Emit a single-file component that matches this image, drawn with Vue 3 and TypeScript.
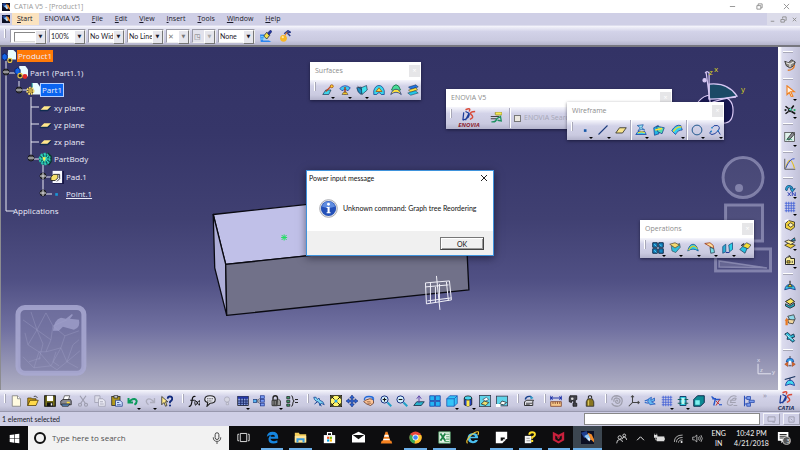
<script setup lang="ts">
import { h } from 'vue'

interface Tool { icon: string; label: string; more?: boolean }

const K = '#10203a'
const icons: Record<string, string> = {
  app: `<rect width="16" height="16" fill="#0b0f24"/><path d="M0 2L7 0L9 7L4 9Z" fill="#1d3f8f"/><path d="M4 6L10 3L13 8L9 12Z" fill="#8fc8f5"/><path d="M8 2L13 4L16 10V14L12 10Z" fill="#f08a2a"/><path d="M8 8L12 10L10 13Z" fill="#fff"/>`,
  brush: `<path d="M0 6H6L4 14H12L15 16H1Z" fill="#2a86f0"/><path d="M1 9H7M1 12H9" stroke="#7fe0ff" stroke-width="1.5"/><path d="M5 8L9 3L13 7L9 12Z" fill="#f4e04a" stroke="${K}"/><path d="M10 4L14 0L16 2L12 7Z" fill="#2233a8" stroke="${K}" stroke-width=".6"/>`,
  wizard: `<circle cx="6" cy="11" r="4.5" fill="#f7b526"/><circle cx="5" cy="9.500" r="1.500" fill="#ffe89a"/><path d="M7 5L12 1L15 3L11 4L15 8" stroke="#2b3c8c" stroke-width="2" fill="none"/><path d="M8 7L11 3" stroke="#e07820" stroke-width="1.500"/>`,
  newdoc: `<path d="M3 1H10L14 5V15H3Z" fill="#fffbe0" stroke="#777"/><path d="M10 1V5H14" fill="#fff" stroke="#777"/>`,
  open: `<path d="M1 14V4H6L7 5H12V8H5Z" fill="#c79a18" stroke="#4d3a00"/><path d="M1 14L4 7H15L12 14Z" fill="#ffd94a" stroke="#4d3a00"/><path d="M9 2Q12 0 14 4" stroke="#222" fill="none"/>`,
  save: `<path d="M1 1H15V15H1Z" fill="#77701a" stroke="#111" stroke-width="1.500"/><rect x="4" y="1" width="8" height="7" fill="#fff"/><rect x="4" y="10" width="8" height="5" fill="#111"/><rect x="9" y="11" width="2" height="3" fill="#eee"/>`,
  print: `<path d="M4 7L6 1H13L11 7Z" fill="#fff" stroke="#444"/><path d="M1 8L4 6H14L15 8V13H1Z" fill="#8b8b92" stroke="#222"/><path d="M2 12H13L11 15H3Z" fill="#5a8bc0" stroke="#222"/><rect x="9" y="9" width="4" height="2" fill="#ffe13a"/>`,
  cut: `<path d="M4 1L11 11M12 1L5 11" stroke="#9c9cad" stroke-width="1.500"/><circle cx="4" cy="13" r="2" fill="none" stroke="#9c9cad" stroke-width="1.500"/><circle cx="12" cy="13" r="2" fill="none" stroke="#9c9cad" stroke-width="1.500"/>`,
  copy: `<path d="M1 1H8V10H1Z" fill="#dcdce8" stroke="#9c9cad"/><path d="M6 5H12L15 8V15H6Z" fill="#e8e8f2" stroke="#9c9cad"/><path d="M8 9H12M8 12H13" stroke="#9c9cad"/>`,
  paste: `<rect x="1" y="2" width="11" height="12" fill="#b49a1c" stroke="#222"/><rect x="4" y="1" width="5" height="3" fill="#ddd" stroke="#222"/><path d="M6 7H12L15 10V15H6Z" fill="#cfe2ff" stroke="#223a88"/><path d="M8 10H11M8 13H13" stroke="#223a88"/>`,
  undo: `<path d="M2 4V10H8M2 10L5 7Q11 3 13 8Q13 11 10 13" fill="none" stroke="#0b9a5c" stroke-width="2.600"/>`,
  redo: `<path d="M14 4V10H8M14 10L11 7Q5 3 3 8Q3 11 6 13" fill="none" stroke="#adadbc" stroke-width="1.800"/>`,
  help: `<path d="M1 2V13L4 10L6 15L8 14L6 9H9Z" fill="#ffe98a" stroke="#222"/><path d="M9 5Q9 2 12 2Q15 2 15 5Q15 7 12 9V11" fill="none" stroke="#102a7c" stroke-width="2.400"/><circle cx="12" cy="14" r="1.400" fill="#102a7c"/>`,
  formula: `<path d="M1 15Q4 16 5 10L6 4Q7 1 10 2M3 7H9" fill="none" stroke="#111" stroke-width="1.600"/><path d="M10 7Q8 10 10 14M15 7Q17 10 15 14M11 8L14 13M14 8L11 13" fill="none" stroke="#111" stroke-width="1.300"/>`,
  bubble: `<path d="M8 1Q15 1 15 6Q15 11 8 11L4 15L5 10Q1 9 1 6Q1 1 8 1Z" fill="#e8e8f2" stroke="#222" stroke-width="1.500"/><path d="M4 5H12M4 8H11" stroke="#555" stroke-width="1.500" stroke-dasharray="2 1"/>`,
  bulb: `<circle cx="8" cy="6" r="3.500" fill="#d6d6e2" stroke="#a8a8b8"/><path d="M7 10H10V13H7Z" fill="#d6d6e2" stroke="#a8a8b8"/>`,
  table: `<rect x="1" y="2" width="14" height="12" fill="#8ca4e8" stroke="#111"/><rect x="1" y="2" width="14" height="3" fill="#2336a8"/><path d="M1 8H15M1 11H15M5 4V14M8.500 4V14M12 4V14" stroke="#1c2a68" stroke-width="1.300"/>`,
  tree: `<path d="M4 8L12 3M4 8H12M4 8L12 13" stroke="#555" fill="none"/><rect x="0" y="6" width="5" height="4" fill="#5bb4f0" stroke="#204080"/><rect x="10" y="1" width="5" height="3.500" fill="#7a9cf5" stroke="#203890"/><rect x="10" y="6" width="5" height="3.500" fill="#7a9cf5" stroke="#203890"/><rect x="10" y="11" width="5" height="3.500" fill="#7a9cf5" stroke="#203890"/>`,
  lock: `<path d="M4 7V4Q4 1 7 1Q10 1 10 4V7" fill="none" stroke="#222" stroke-width="1.800"/><rect x="2" y="6" width="9" height="9" rx="2" fill="#444"/><path d="M4 8V13M7 8V13" stroke="#aaa"/><path d="M11 5L14 8V14H10" fill="#999" stroke="#222"/>`,
  rules: `<path d="M1 2H5V5H1ZM1 7H5V10H1ZM1 12H5V15H1Z" fill="#3aa06a" stroke="#222"/><path d="M7 1Q9 1 9 4Q9 8 11 8Q9 8 9 12Q9 15 7 15" stroke="#222" fill="none" stroke-width="1.300"/><path d="M12 6H16M12 10H16" stroke="#222" stroke-width="1.300"/>`,
  fly: `<path d="M1 3L4 3L6 6L8 4L9 7L13 9L15 13L11 11L9 14L8 10L4 8L2 6Z" fill="#7fd8f5" stroke="#123f90"/><path d="M2 12L6 9M11 15L9 11" stroke="#123f90" stroke-width="1.300"/>`,
  fit: `<rect x=".500" y=".500" width="15" height="15" fill="#fff56a" stroke="#111"/><path d="M2 2L6 6M14 2L10 6M2 14L6 10M14 14L10 10" stroke="#111" stroke-width="1.300"/><path d="M2 5V2H5M11 2H14V5M2 11V14H5M11 14H14V11" fill="none" stroke="#111"/><path d="M8 5.500L10.500 8L8 10.500L5.500 8Z" fill="#26a4e8"/>`,
  pan: `<path d="M8 0L11 4H9V7H12V5L16 8L12 11V9H9V12H11L8 16L5 12H7V9H4V11L0 8L4 5V7H7V4H5Z" fill="#2b62d8" stroke="#0d2466" stroke-width=".700"/>`,
  rotate: `<path d="M2 7Q1 2 8 2Q14 2 14 5" fill="none" stroke="#2068d8" stroke-width="1.800"/><path d="M3 7L9 5L14 6L14 11L10 14L5 12L1 9Z" fill="#ffc79a" stroke="#5a2a18"/><path d="M5 9H10M6 11H11" stroke="#5a2a18" stroke-width=".700"/><path d="M11 4L15 5L14 8" fill="#2068d8"/>`,
  zoomin: `<circle cx="6" cy="6" r="4.800" fill="#d8f4ff" stroke="#102a7c" stroke-width="1.300"/><path d="M3.500 6H8.500M6 3.500V8.500" stroke="#111" stroke-width="1.500"/><path d="M10 10L15 15" stroke="#1fa0c8" stroke-width="2.600"/>`,
  zoomout: `<circle cx="6" cy="6" r="4.800" fill="#d8f4ff" stroke="#102a7c" stroke-width="1.300"/><path d="M3.500 6H8.500" stroke="#111" stroke-width="1.500"/><path d="M10 10L15 15" stroke="#1fa0c8" stroke-width="2.600"/>`,
  normal: `<path d="M1 14L5 9H15L11 14Z" fill="#28b4cc" stroke="${K}"/><path d="M8 11V2M5 5L8 1L11 5" fill="none" stroke="#5a44a8" stroke-width="1.300"/>`,
  views: `<path d="M1 1H7.500V7.500H1ZM8.500 1H15V7.500H8.500ZM1 8.500H7.500V15H1ZM8.500 8.500H15V15H8.500Z" fill="#25b4f4" stroke="#1238a0"/>`,
  cube: `<path d="M1 5L5 1H15V11L11 15H1Z" fill="#35c4f8" stroke="#1650b0"/><path d="M1 5H11V15M11 5L15 1" fill="none" stroke="#1650b0"/>`,
  cyl: `<path d="M3 4V13Q8 17 13 13V4Z" fill="#2446c8" stroke="#111"/><path d="M6 5V15H10V5Z" fill="#ffe84a"/><ellipse cx="8" cy="4" rx="5" ry="2.800" fill="#48d6f0" stroke="#111"/>`,
  hide: `<rect x=".500" y=".500" width="15" height="15" fill="#5fd4ea" stroke="#334"/><path d="M3 12L7 8L13 10L9 14Z" fill="#ece070" stroke="#222"/><path d="M5 6L10 3L13 6L9 8Z" fill="#fff" stroke="#456"/>`,
  swap: `<rect x=".500" y="1.500" width="15" height="13" fill="#5fd4ea" stroke="#334"/><path d="M5 12L8 8L14 10L10 13Z" fill="#fff" stroke="#222"/><path d="M0 12H6V16H0Z" fill="#fff"/>`,
  batch: `<path d="M3 6Q4 1 10 2L12 4" fill="none" stroke="#16408c" stroke-width="1.800"/><path d="M10 1L14 4L10 6Z" fill="#2c9cc8"/><path d="M2 9L5 7H14L13 9V14H2Z" fill="#dedee4" stroke="#222" stroke-width="1.200"/><path d="M4 11H12M4 13H9" stroke="#222"/>`,
  measure: `<path d="M1 4H15M1 1V7M15 1V7M4 2L1 4L4 6M12 2L15 4L12 6" fill="none" stroke="#2034a8" stroke-width="1.300"/><rect x="1" y="9" width="14" height="6" fill="#f6c88a" stroke="#7a3c20"/><path d="M4 9V12M7 9V12M10 9V12M13 9V12" stroke="#7a3c20"/>`,
  caliper: `<path d="M4 1H13V6L11 7V11H13V15H8V11H9V8H6V10L3 9V4Z" fill="#44444c" stroke="#111"/><circle cx="7" cy="5" r="1.700" fill="#ddd"/>`,
  weight: `<path d="M6 4Q5 1 8 1Q11 1 10 4" fill="none" stroke="#222" stroke-width="1.400"/><path d="M5 5H11L13 9V15H3V9Z" fill="#8a7620" stroke="#222"/><path d="M6 7V14" stroke="#d8c45a" stroke-width="1.600"/>`,
  update: `<path d="M1 7Q1 1 8 1Q15 2 15 8Q14 15 8 15Q3 15 1 11M4 9Q3 4 8 4Q12 5 12 8Q11 12 8 11Q5 10 7 7Q9 6 9 9" fill="none" stroke="#9e9eac" stroke-width="1.700"/>`,
  axis: `<path d="M6 1V10H15M6 10L1 15M4 3L6 1L8 3M13 8L15 10L13 12" fill="none" stroke="#444" stroke-width="1.400"/>`,
  mean: `<path d="M1 8L6 6M1 10L6 11" stroke="#2064c8" stroke-width="1.500"/><path d="M6 5L10 3L9 7L14 4V8L10 9L15 12L8 13L5 9Z" fill="#64b8f0" stroke="#2454b8"/>`,
  grid: `<path d="M1 3H15M1 6.300H15M1 9.700H15M1 13H15M3 1V15M6.300 1V15M9.700 1V15M13 1V15" stroke="#3a5ad4" stroke-width="1"/>`,
  box3: `<path d="M4 2H12V14H4Z" fill="#30d0e0" stroke="#12406c" stroke-width="1.300"/><path d="M1 6H15M1 11H15" stroke="#0c5c58" stroke-width="1.300"/><path d="M6 4H10V12H6Z" fill="#bdf6f2"/>`,
  solid: `<path d="M1 6L6 1H15V10L10 15H1Z" fill="#0c8a94" stroke="#0b2a4c" stroke-width="1.300"/><path d="M3 7H9V13H3Z" fill="#7ff0f0"/>`,
  link: `<path d="M2 2L7 6L5 14M7 6H14M3 5H8" fill="none" stroke="#2454c8" stroke-width="1.800"/><path d="M8 14L13 6M8 8L13 13" stroke="#c03030" stroke-width="1.300"/><path d="M12 13H16" stroke="#2454c8" stroke-width="1.500"/>`,
  clip: `<path d="M14 2Q8 -1 4 5Q0 11 3 13Q7 15 9 12M5 7H12Q15 4 12 4Q7 5 6 10H13M10 14H15" fill="none" stroke="#a2a2b2" stroke-width="1.500"/>`,
  struct: `<path d="M2 1V15M2 4H6M2 12H6" stroke="#2c50b8" stroke-width="1.500"/><path d="M5 2H10V6H5ZM8 7H15V10H8ZM5 11H10V15H5Z" fill="#7a9cf0" stroke="#2446a8"/>`,
  sketchpt: `<path d="M1 14L5 8H12L9 14Z" fill="#3fd2e8" stroke="${K}" stroke-width=".800"/><path d="M5 10L12 3" stroke="#c04418" stroke-width="1.500"/><circle cx="13" cy="3" r="2" fill="#ffd22e" stroke="#a04a10"/>`,
  revolve: `<path d="M1 6Q7 -1 15 5L12 9Q8 5 4 9Z" fill="#3cc8ee" stroke="#2038a8"/><path d="M8 4V14" stroke="#a84418" stroke-width="2"/><path d="M4 14H12L10 11H6Z" fill="#f4c628" stroke="#222" stroke-width=".600"/>`,
  offset: `<path d="M1 5L7 4L9 9L7 14Q2 12 1 5Z" fill="#1f8cc0" stroke="${K}" stroke-width=".800"/><path d="M7 5L14 2L15 8L8 14Z" fill="#42e0ee" stroke="${K}" stroke-width=".800"/><path d="M2 3L8 8" stroke="#334"/>`,
  sweep: `<path d="M1 14V9Q3 2 8 2Q13 2 15 9V14H11Q8 9 5 14Z" fill="#39d6ea" stroke="#123f90"/><path d="M4 10L8 5L12 10Z" fill="#ffe23a" stroke="#a0480c"/>`,
  fill: `<path d="M2 8Q4 1 8 1Q12 1 14 8L10 9H6Z" fill="#49dc98" stroke="#146040"/><path d="M1 14Q3 7 8 7Q13 7 15 14Q8 8 1 14Z" fill="#ffe23a" stroke="#143080"/>`,
  multi: `<path d="M2 4L12 1L15 4L5 7Z" fill="#2074e0" stroke="${K}" stroke-width=".600"/><path d="M2 8L12 5L14 8L5 11Z" fill="#ffe23a" stroke="${K}" stroke-width=".600"/><path d="M1 12L11 9L15 12L5 15Z" fill="#25c8e8" stroke="${K}" stroke-width=".600"/>`,
  point: `<rect x="6.500" y="7" width="3.500" height="3.500" fill="#1658a8"/>`,
  line: `<path d="M2 14L14 2" stroke="#1c3c7c" stroke-width="1.500"/>`,
  plane: `<path d="M1 12L6 5H15L10 12Z" fill="#f8e38c" stroke="#3c3c30" stroke-width="1.200"/>`,
  project: `<path d="M3 2L11 1L9 5L13 8L9 7L4 9L7 5Z" fill="#9be4ee" stroke="#1a58a8"/><path d="M1 14L4 10H13L15 14Z" fill="#35c8ea" stroke="#1a3aa0"/><path d="M4 12Q9 9 13 12" stroke="#f0d830" fill="none" stroke-width="1.500"/>`,
  inter: `<path d="M1 5L7 2L8 13L2 15Z" fill="#24b4e4" stroke="#123f90"/><path d="M5 3L15 5L12 13L6 10Z" fill="#58dcb0" stroke="#123f90"/><path d="M3 8L12 6" stroke="#ffe23a" stroke-width="2"/>`,
  parallel: `<path d="M1 9Q6 0 13 2L15 8Q9 8 6 14Z" fill="#35d0ee" stroke="#1a3aa0"/><path d="M3 10Q8 3 14 4" fill="none" stroke="#f4d82a" stroke-width="1.800"/>`,
  circle: `<circle cx="8" cy="8" r="6.500" fill="none" stroke="#1c548c" stroke-width="1.300"/>`,
  spline: `<path d="M3 9Q-1 13 4 14Q8 14 12 9Q16 4 11 2Q6 1 4 5M12 9L15 14" fill="none" stroke="#1c3c98" stroke-width="1.300"/><path d="M3 4h2v2h-2zM2 9h2v2h-2zM11 8h2v2h-2z" fill="#2a8cd0"/>`,
  join: `<path d="M1 1H7V7H1ZM9 1H15V7H9ZM1 9H7V15H1ZM9 9H15V15H9Z" fill="#1584c4" stroke="#0a2848" stroke-width="1.300"/><path d="M3 3L6 6M10 3L13 6M3 11L6 14" stroke="#6ae6f8"/>`,
  heal: `<path d="M3 6L8 5L14 2L15 7L9 14L4 12Z" fill="#32bcd8" stroke="#27404c" stroke-width=".800"/><path d="M1 3L8 1L14 4L8 8Z" fill="#f3d870" stroke="#5c5030"/>`,
  border: `<path d="M1 12Q3 3 8 3Q13 3 15 12Q8 7 1 12Z" fill="#2fd0ea" stroke="#12508c"/><path d="M2 11Q8 1 14 9" fill="none" stroke="#d8c82a" stroke-width="1.600"/>`,
  extract: `<path d="M1 2L8 1Q14 4 13 9L8 6Z" fill="#ffdf9a" stroke="#983010"/><path d="M8 7L13 9L14 14L9 15Z" fill="#7adce4" stroke="#244050"/>`,
  translate: `<path d="M1 6L5 3V13L1 15Z" fill="#2bb0d8" stroke="#184878"/><path d="M9 4L14 1V10L10 13Z" fill="#2bd0e8" stroke="#184878"/><path d="M5 14H10" stroke="#223a98" stroke-width="1.500"/>`,
  extrap: `<path d="M1 10L6 5L11 8L8 15Z" fill="#28c0e0" stroke="${K}" stroke-width=".800"/><path d="M5 6L10 1L16 4L12 9Z" fill="#f4de38" stroke="${K}" stroke-width=".800"/><path d="M3 5L7 2" stroke="#222" stroke-width="1.500"/>`,
  shape: `<path d="M1 3L6 5L10 1L15 4L13 9L8 12L3 9Z" fill="#8c8880" stroke="#222"/><path d="M3 5L8 7L13 4M8 7V11" stroke="#eee" fill="none" stroke-width="1.400"/><path d="M5 15Q13 15 14 8" stroke="#e07820" stroke-width="1.800" fill="none"/>`,
  select: `<path d="M4 1V13L7 10L10 16L12 15L9 9H14Z" fill="#fff2e0" stroke="#f08020" stroke-width="1.500"/>`,
  gear: `<path d="M2 3L6 6M13 2L10 6M2 13L6 10M15 13L10 10" stroke="#111" stroke-width="2"/><circle cx="8" cy="8" r="3" fill="#282828"/><path d="M6 8L9 5L11 9Z" fill="#60e0c8"/><circle cx="2" cy="8" r="1.500" fill="#222"/><circle cx="14" cy="8" r="1.500" fill="#28b06a"/>`,
  sketch: `<rect x="1" y="2" width="13" height="12" fill="#dff2ec" stroke="#444"/><path d="M4 11L11 2L14 4L7 12Z" fill="#8c8c94" stroke="#222"/><path d="M3 12Q6 8 11 12" stroke="#28a070" fill="none"/>`,
  curve: `<path d="M1 1V15H15" stroke="#333" fill="none"/><path d="M2 14Q8 -8 14 14" stroke="#e0bc20" fill="none" stroke-width="1.400"/><path d="M2 14Q8 0 14 1" stroke="#3850c0" fill="none" stroke-width="1.300"/>`,
  rename: `<path d="M2 8Q2 1 8 2Q12 3 12 7L15 6L11 11L8 6H10Q9 4 7 4Q5 4 4 9Z" fill="#28a8d8" stroke="#144878"/><path d="M5 11L9 16M9 11L5 16M11 16V11L15 16V11" stroke="#2c3cb4" stroke-width="1.200" fill="none"/>`,
  pad: `<path d="M2 6L6 2L14 4V11L9 15L2 12Z" fill="#f2d23c" stroke="#222"/><path d="M5 8L9 5L13 8L9 11Z" fill="#fff3b8" stroke="#222"/><path d="M1 3L6 1" stroke="#fff" stroke-width="2"/>`,
  layers: `<path d="M1 11L6 8L15 11L9 15Z" fill="#f2d23c" stroke="#222"/><path d="M1 6L6 4L14 7L9 10Z" fill="#fff0a0" stroke="#222"/><path d="M9 5L14 1L15 5Z" fill="#25a4d8" stroke="#222"/>`,
  block: `<path d="M2 6L5 4H7V2L9 4V6H14V14H2Z" fill="#f8ee9c" stroke="#222" stroke-width="1.300"/><path d="M4 9H8V12H4ZM11 9V12" fill="#d8b830" stroke="#222"/>`,
  dome: `<path d="M1 13Q2 6 8 6Q14 6 15 13Q8 9 1 13Z" fill="#35c8e8" stroke="#17408c" stroke-width="1.200"/><path d="M5 9L8 5L11 9Z" fill="#ffe23a" stroke="#222"/><path d="M8 5V1" stroke="#222" stroke-width="1.500"/>`,
  split: `<path d="M2 6L9 2L14 6L8 10Z" fill="#f4e35a" stroke="#222" stroke-width="1.300"/><path d="M2 9L8 12L14 8L14 12L8 15L2 12Z" fill="#25a4bc" stroke="#222"/>`,
  thick: `<path d="M5 3L13 1L15 7L9 10Z" fill="#8fd8e8" stroke="#333"/><path d="M5 7L14 8L12 13L6 12Z" fill="#f2d7a0" stroke="#333"/><path d="M2 15V9L1 9L3.500 5L6 9H5V15Z" fill="#e87820"/>`,
  morph: `<path d="M1 4L5 2L9 6L13 4L14 8L10 9L14 13L12 15L7 11L4 11L5 8Z" fill="#2fbcd8" stroke="#12304c" stroke-width="1.200"/><path d="M3 5L12 12" stroke="#e8ffff"/>`,
  analysis: `<path d="M3 8Q3 3 8 3Q13 3 13 8Z" fill="#30a4e8" stroke="#173c90"/><circle cx="8" cy="8" r="2" fill="#fff"/><path d="M1 11L5 8V14ZM15 11L11 8V14Z" fill="#e06820" stroke="#8a3010" stroke-width=".600"/><path d="M8 0V3M6 13H10" stroke="#222"/>`,
  drape: `<path d="M2 14Q3 7 8 7Q13 7 14 14Q8 10 2 14Z" fill="#42d8ee" stroke="#1a3aa0" stroke-width="1.200"/><path d="M1 6L15 2M8 4V7" stroke="#14305c" stroke-width="1.400"/>`,
  enovia: `<path d="M4 4L8 6L4 14M2 5L1 14M8 6Q10 11 1 14" fill="none" stroke="#1c3c98" stroke-width="1.400"/><path d="M4 2Q11 -1 8 4M15 4Q9 4 10 7Q15 11 9 13" fill="none" stroke="#d84a38" stroke-width="1.600"/>`,
  transfer: `<rect x="7" y="0" width="9" height="4" rx="1" fill="#f6ea58" stroke="#8c8428"/><path d="M1 6H12M1 9H8" stroke="#444" stroke-width="1.500"/><path d="M2 13Q8 14 9 9L14 6L15 12L10 11" fill="none" stroke="#1e9060" stroke-width="1.800"/>`,
  taskview: `<path d="M4 3H12V13H4ZM1 4V12M1 4H2.500M1 12H2.500M15 4V12M15 4H13.500M15 12H13.500" fill="none" stroke="#ddd" stroke-width="1.200"/>`,
  edge: `<path d="M1 7Q2 1 8 1Q15 1 15 8V9.500H5.500Q6 12.500 10 12.500Q12.500 12.500 14 11.500V14.500Q12 15.500 9 15.500Q3 15.500 3 9.500Q3.500 6 7 5Q3 5 1 7ZM5.600 7H11Q11 4.500 8.500 4.500Q6 4.500 5.600 7Z" fill="#1686e0" fill-rule="evenodd"/>`,
  explorer: `<path d="M1 2H6L7 4H15V14H1Z" fill="#f5cf5a"/><path d="M1 6H15V14H1Z" fill="#ffe69a"/><path d="M3 14V9H13V14H10.500V11.500H5.500V14Z" fill="#3a9ce0"/>`,
  store: `<path d="M1 5H15V15H1Z" fill="#fff"/><path d="M5.500 5V2H10.500V5" fill="none" stroke="#fff" stroke-width="1.300"/><rect x="5" y="7" width="2.700" height="2.700" fill="#f25022"/><rect x="8.300" y="7" width="2.700" height="2.700" fill="#7fba00"/><rect x="5" y="10.300" width="2.700" height="2.700" fill="#00a4ef"/><rect x="8.300" y="10.300" width="2.700" height="2.700" fill="#ffb900"/>`,
  mail: `<path d="M0 5L8 1L16 5V14H0Z" fill="#fff"/><path d="M1 5H15L8 10Z" fill="#111"/>`,
  vlc: `<path d="M6.800 1H9.200L13 13H3Z" fill="#f58220"/><path d="M5.800 4.500H10.200L11 7H5ZM4.300 9.500H11.700L12.200 11.500H3.800Z" fill="#fff"/><path d="M2 12H14L15 15.500H1Z" fill="#f58220"/>`,
  chrome: `<circle cx="8" cy="8" r="7.500" fill="#e8473a"/><path d="M8 8L1.500 4.200A7.500 7.500 0 0 0 7 15.400Z" fill="#34a853"/><path d="M8 8L7 15.400A7.500 7.500 0 0 0 15 5H8Z" fill="#fbc52c"/><circle cx="8" cy="8" r="3.700" fill="#fff"/><circle cx="8" cy="8" r="2.800" fill="#4285f4"/>`,
  excel: `<path d="M1 1H15V15H1Z" fill="#e8f4ea" stroke="#5aa870"/><path d="M3 3L9 12M9 3L3 12" stroke="#1f8446" stroke-width="2.300"/><path d="M10 4H14M10 7H14M10 10H14M8 13H14" stroke="#5aa870" stroke-width="1.300"/>`,
  ie: `<path d="M5.500 9H15Q15 2.500 8.500 2.500Q2 3 2 9Q2.500 15 8.500 15Q13 15 14.700 11H11Q10 12.500 8.500 12.500Q5.700 12.300 5.500 9ZM5.600 7Q6 5 8.500 5Q11 5 11.300 7Z" fill="#4cc0f0" fill-rule="evenodd"/><path d="M2 15Q-1 13 5 6Q12 0 15 1Q16 2 14.500 5" fill="none" stroke="#f2c430" stroke-width="1.400"/>`,
  note: `<path d="M1 1H15V9L9 15H1Z" fill="#fff"/><path d="M7 8H12L12 9L9 12H7Z" fill="#111"/><path d="M10 10H15V15H10Z" fill="#0d0d0f"/><path d="M10 10H14L10 14Z" fill="#fff"/>`,
  chm: `<path d="M1 6H9V15H1Z" fill="#f4f4f4"/><path d="M3 9H7M3 12H8" stroke="#888"/><path d="M6.500 4.500Q6.500 1.500 10 1.500Q13.500 1.500 13.500 4Q13.500 6.500 10 7.500V9.500" fill="none" stroke="#ffe02a" stroke-width="2.300"/><rect x="8.800" y="11" width="2.500" height="2.500" fill="#ffe02a"/>`,
  shield: `<path d="M1 1L8 4.500L15 1V11.500L8 15.500L1 11.500Z" fill="#c8203c"/><path d="M4 5.500L8 8L12 5.500V10L8 12.500L4 10Z" fill="#111"/><path d="M6.500 7L8 8L9.500 7V8.500L8 10L6.500 8.500Z" fill="#c8203c"/>`,
  people: `<circle cx="5.500" cy="6.500" r="2.500" fill="none" stroke="#ddd" stroke-width="1.300"/><path d="M1 15Q1 9.500 5.500 9.500Q9 9.500 9.500 13" fill="none" stroke="#ddd" stroke-width="1.300"/><circle cx="12" cy="3.500" r="2" fill="none" stroke="#ddd" stroke-width="1.300"/><path d="M9 9Q9 6 12 6Q15 6 15.500 10" fill="none" stroke="#ddd" stroke-width="1.300"/>`,
  chevron: `<path d="M3 10.500L8 5.500L13 10.500" fill="none" stroke="#eee" stroke-width="1.400"/>`,
  battery: `<rect x="4" y="5" width="11" height="7" fill="#ddd"/><path d="M15 7H16V10H15ZM0 3H5V7H0Z" fill="#ddd"/><path d="M1 1V3M4 1V3M2.500 7V10H6" stroke="#ddd" fill="none"/>`,
  wifi: `<path d="M2 13Q2 3 14 3M5 13.500Q5 6.500 14 6.500M8 14Q8 10 14 10" fill="none" stroke="#bbb" stroke-width="1.300"/><circle cx="12.500" cy="13" r="1.500" fill="#eee"/>`,
  sound: `<path d="M1 6H3.500L7 3V13L3.500 10H1Z" fill="none" stroke="#ddd"/><path d="M9 6Q10.500 8 9 10M11 4.500Q13.500 8 11 11.500M13 3Q17 8 13 13" fill="none" stroke="#ddd"/>`,
  mic: `<rect x="5.500" y="1" width="5" height="9" rx="2.500" fill="none" stroke="#444" stroke-width="1.300"/><path d="M3 7Q3 12.500 8 12.500Q13 12.500 13 7M8 12.500V16" fill="none" stroke="#444" stroke-width="1.200"/>`,
  windows: `<path d="M1 3L7.300 2V7.600H1ZM8.200 1.900L15 1V7.600H8.200ZM1 8.500H7.300V14L1 13.100ZM8.200 8.500H15V15L8.200 14.100Z" fill="#fff"/>`,
  treeroot: `<path d="M7 1H13L16 4V12H6Z" fill="#eafcff"/><path d="M0 7L3 5L6 7V11L3 13L0 11Z" fill="#1464e8" stroke="#08206c"/><circle cx="9" cy="13" r="2.300" fill="#222" stroke="#e8c84a" stroke-width="1.200"/>`,
  treepart: `<path d="M6 0H13L16 4V12H6Z" fill="#eafcff"/><path d="M1 4L4 2L7 4V8L4 10L1 8Z" fill="#1464e8" stroke="#08206c"/><circle cx="7" cy="11" r="2.500" fill="#222" stroke="#e8c84a" stroke-width="1.300"/><circle cx="12.500" cy="12" r="2.800" fill="#e02828"/>`,
  treegear: `<path d="M7 0H13L16 4V13H8Z" fill="#eafcff"/><path d="M7 0V6" stroke="#18b0a0"/><circle cx="5" cy="9" r="3.600" fill="#3c3010" stroke="#f0d870" stroke-width="2.200" stroke-dasharray="2 1"/><circle cx="5" cy="9" r="2.500" fill="#c8a848"/>`,
  treeplane: `<path d="M3 10L7 6H15L11 10Z" fill="#ffe88a"/><path d="M2 11H11L15 7" stroke="#102c50" stroke-width="1.600" fill="none"/>`,
  treebody: `<circle cx="8" cy="8" r="6" fill="#0c5a60" stroke="#28c0a8" stroke-width="2.500" stroke-dasharray="2.500 1.200"/><path d="M8 2V14M2 8H14M4 4L12 12M12 4L4 12" stroke="#3cf0d0" stroke-width="1.200"/><path d="M5 6L9 6L7 11Z" fill="#fff04a"/><path d="M11 1L15 5V11L12 15" stroke="#08382c" stroke-width="1.500" fill="none"/>`,
  treepad: `<path d="M3 1H14V15H3Z" fill="#f8f8ff"/><path d="M14 1H16V16H3V15H14Z" fill="#151545"/><path d="M1 8L4 5H9V9L6 12H1Z" fill="#f6e06a" stroke="#222"/><path d="M9 5H11V10L8 13" fill="none" stroke="#222"/>`,
  treepoint: `<rect x="6" y="7" width="3" height="3" fill="#1898d8"/>`
}

function Icon(props: { name: string }) {
  return h('svg', { class: 'icon', viewBox: '0 0 16 16', 'aria-hidden': 'true', innerHTML: icons[props.name] })
}
Icon.props = ['name']

// "name:Label" entries; a trailing "+" marks a button with a drop-down arrow
const tools = (list: string): Tool[] =>
  list.split(',').map((entry) => {
    const [icon, label] = entry.replace('+', '').split(':')
    return { icon, label, more: entry.endsWith('+') }
  })

const menus = ['ENOVIA V5', 'File', 'Edit', 'View', 'Insert', 'Tools', 'Window', 'Help']

const combos = [
  { label: 'Colour', value: '', kind: 'swatch' },
  { label: 'Opacity', value: '100%', kind: 'wide' },
  { label: 'Thickness', value: 'No Wid', kind: 'wide' },
  { label: 'Line type', value: 'No Line', kind: 'wide' },
  { label: 'Point symbol', value: '✕', kind: 'small' },
  { label: 'Rendering', value: '◳', kind: 'small off' },
  { label: 'Layer', value: 'None', kind: 'wide' }
]

const bottomGroups: Tool[][] = [
  tools('newdoc:New,open:Open,save:Save,print:Print,cut:Cut,copy:Copy,paste:Paste,undo:Undo+,redo:Redo+,help:Help'),
  tools('formula:Formula,bubble:Comment,bulb:Advisor,table:Design table+,tree:Relations,lock:Lock+,rules:Rules'),
  tools('fly:Fly,fit:Fit all,pan:Pan,rotate:Rotate,zoomin:Zoom in,zoomout:Zoom out,normal:Normal view,views:Multi view,cube:Iso view+,cyl:Shading+,hide:Hide,swap:Swap space'),
  tools('batch:Batch'),
  tools('measure:Measure,caliper:Measure item,weight:Inertia'),
  tools('update:Update,axis:Axis system,mean:Mean,grid:Grid+,box3:Work on support+,solid:Solid,link:Links,clip:Clip,struct:Structure')
]

const sideGroups: Tool[][] = [
  tools('shape:Workbench'),
  tools('select:Select+,gear:Selection filter+'),
  tools('sketch:Sketch+'),
  tools('curve:Law'),
  tools('rename:Repeat+,grid:Grid+,pad:Pad,layers:Layers+,block:Block+'),
  tools('dome:Dome,split:Split,thick:Thicken,morph:Morph'),
  tools('analysis:Analysis,drape:Drape')
]

const palettes = [
  { id: 'surfaces', title: 'Surfaces', tools: tools('sketchpt:Extrude+,revolve:Revolve+,offset:Offset+,sweep:Sweep,fill:Fill,multi:Multi-section') },
  { id: 'wireframe', title: 'Wireframe', tools: tools('point:Point+,line:Line+,plane:Plane,sep:,project:Projection+,inter:Intersection,parallel:Parallel curve+,sep:,circle:Circle+,spline:Spline+') },
  { id: 'operations', title: 'Operations', tools: tools('join:Join+,heal:Split+,border:Boundary+,extract:Fillet+,translate:Translate+,extrap:Extrapolate') }
]

const nodes = [
  { text: 'Product1', icon: 'treeroot', depth: 0, look: 'orange' },
  { text: 'Part1 (Part1.1)', icon: 'treepart', depth: 1, look: '' },
  { text: 'Part1', icon: 'treegear', depth: 2, look: 'blue' },
  { text: 'xy plane', icon: 'treeplane', depth: 3, look: '' },
  { text: 'yz plane', icon: 'treeplane', depth: 3, look: '' },
  { text: 'zx plane', icon: 'treeplane', depth: 3, look: '' },
  { text: 'PartBody', icon: 'treebody', depth: 3, look: '' },
  { text: 'Pad.1', icon: 'treepad', depth: 4, look: '' },
  { text: 'Point.1', icon: 'treepoint', depth: 4, look: 'under' },
  { text: 'Applications', icon: '', depth: 5, look: '' }
]

const apps = [
  { icon: 'taskview', label: 'Task view', state: '' },
  { icon: 'edge', label: 'Edge', state: 'open' },
  { icon: 'explorer', label: 'File Explorer', state: 'open' },
  { icon: 'store', label: 'Store', state: '' },
  { icon: 'mail', label: 'Mail', state: '' },
  { icon: 'vlc', label: 'VLC', state: '' },
  { icon: 'chrome', label: 'Chrome', state: 'open' },
  { icon: 'excel', label: 'Excel', state: 'open' },
  { icon: 'ie', label: 'Internet Explorer', state: '' },
  { icon: 'note', label: 'Notes', state: 'open' },
  { icon: 'chm', label: 'Help viewer', state: 'open' },
  { icon: 'shield', label: 'Security', state: 'open' },
  { icon: 'app', label: 'CATIA', state: 'open active' }
]
</script>

<template>
  <div class="desktop">
    <header class="titlebar">
      <Icon name="app" class="logo" />
      <h1>CATIA V5 - [Product1]</h1>
      <div class="caption">
        <button aria-label="Minimize"><svg viewBox="0 0 8 8"><path d="M1 4H7" /></svg></button>
        <button aria-label="Restore"><svg viewBox="0 0 8 8"><path d="M1 3H5.500V7H1ZM2.500 3V1H7V5.500H5.500" /></svg></button>
        <button aria-label="Close"><svg viewBox="0 0 8 8"><path d="M1 1L7 7M7 1L1 7" /></svg></button>
      </div>
    </header>

    <nav class="menubar">
      <Icon name="app" class="logo" />
      <button class="menu start"><u>S</u>tart</button>
      <button v-for="m in menus" :key="m" class="menu">
        <template v-if="m === 'ENOVIA V5'">{{ m }}</template>
        <template v-else><u>{{ m[0] }}</u>{{ m.slice(1) }}</template>
      </button>
      <div class="mdi">
        <button aria-label="Minimize document"><svg viewBox="0 0 8 8"><path d="M2 6H6" /></svg></button>
        <button aria-label="Restore document"><svg viewBox="0 0 8 8"><path d="M1 4H5V7H1ZM3 3V1H7V5H6" /></svg></button>
        <button aria-label="Close document"><svg viewBox="0 0 8 8"><path d="M2 2L6 6M6 2L2 6" /></svg></button>
      </div>
    </nav>

    <div class="bar format">
      <i class="grip"></i>
      <label v-for="c in combos" :key="c.label" class="combo" :class="c.kind">
        <select :aria-label="c.label"><option>{{ c.value }}</option></select>
      </label>
      <button class="tool" aria-label="Paint"><Icon name="brush" /></button>
      <button class="tool" aria-label="Wizard"><Icon name="wizard" /></button>
    </div>

    <div class="middle">
      <main class="viewport">
        <svg class="scene" viewBox="0 47 778 343" aria-hidden="true">
          <g class="mark">
            <circle cx="743" cy="177.500" r="20" fill="#fff" fill-opacity=".08" stroke-width="3" />
            <circle cx="739" cy="188" r="4" stroke="none" class="solid" />
            <rect x="725.500" y="205" width="37" height="36" fill="#fff" fill-opacity=".08" stroke-width="3" />
            <rect x="715.500" y="249" width="55" height="22" fill="none" stroke-width="3" />
            <path d="M719 267V261L767 268Z" fill="#fff" fill-opacity=".15" stroke-width="1.500" />
          </g>
          <g>
            <rect x="17" y="307.500" width="66" height="66" rx="7" fill="#7474a2" fill-opacity=".6" stroke="#a9a9d2" stroke-width="5" stroke-opacity=".85" />
            <path class="veins" d="M22 320L36 330L45 313L52 326L66 320M30 312L36 330L27 345L38 352L33 368M36 330L50 340L45 352L60 348L66 362L79 351M50 340L52 326L64 336L78 331M38 352L50 366L60 348L64 336M22 357L33 368L50 366L56 370L66 362L77 368M24 333L27 345M45 352L38 352M66 362L72 345L78 340M36 330L42 344L38 360M55 352L52 362L58 366M28 362L40 358" />
            <path d="M52 331Q53 320 60 318L65 319L71 314L72 315L69 319L78 320Q80 328 73 330L62 327L58 331Z" fill="#a3a3ce" fill-opacity=".75" />
          </g>
          <g stroke="#0a0a12" stroke-width="1.300" stroke-linejoin="round">
            <path d="M212.500 214.500L225 264.500L466 239L440 190Z" fill="#c0c0e8" />
            <path d="M212.500 214.500L225 264.500L226 315.500L214 268Z" fill="#aeaed8" />
            <path d="M225 264.500L466 239L468.500 290L226 315.500Z" fill="#717189" />
          </g>
          <path d="M281 235L286 240M286 235L281 240M280.500 237.500H286.500M283.500 234.500V240.500" stroke="#20e060" stroke-width="1" />
          <path class="triad" d="M425 283L449 281L451 300L426 304ZM425 287L448 285M427 301L451 298M430 283V303M446 282L448 301M436 276L439.500 310M435 287V303M439 284V301" />
          <g stroke="#d8c8f4" fill="none" stroke-width="1.200">
            <path d="M694 110Q700 92 718 95Q733 97 733 110Q733 123 723 123H700Z" fill="#181850" />
            <path d="M709 84Q728 82 737 96Q724 99 709 99Z" fill="#1b4a66" />
            <path d="M706 72L710 102M709 72V99M705 73Q707 70 709 73M708 104Q721 98 736 97" />
            <circle cx="704.500" cy="80" r="1.600" fill="#d8c8f4" />
          </g>
          <g class="axes"><text x="714" y="72">x</text><text x="709" y="75">z</text><text x="741" y="92">y</text></g>
          <path d="M758 364V374H771" stroke="#e4e4f0" fill="none" />
          <g class="mini"><text x="757" y="362">x</text><text x="760" y="372">z</text><text x="772" y="374">y</text></g>
        </svg>

        <section class="tree" aria-label="Specification tree">
          <svg class="branches" viewBox="0 0 90 173" aria-hidden="true">
            <path d="M5 14V164H13M5 26H15M18 34V43H28M30 50V112H38M30 60H38M30 77H38M30 95H38M42 118V147H51M42 130H51" />
            <g>
              <circle cx="5" cy="25" r="3" /><circle cx="18" cy="43" r="3" /><circle cx="30" cy="111" r="3" />
              <circle cx="42" cy="129" r="3" /><circle cx="42" cy="146" r="3" />
            </g>
            <path class="signs" d="M2 25H8M15 43H21M27 111H33M39 129H45M42 126V132M39 146H45M42 143V149" />
          </svg>
          <div v-for="n in nodes" :key="n.text" class="node" :class="'d' + n.depth">
            <Icon v-if="n.icon" :name="n.icon" />
            <span :class="n.look">{{ n.text }}</span>
          </div>
        </section>

        <section class="palette enovia">
          <header><h2>ENOVIA V5</h2><button class="x" aria-label="Close ENOVIA V5">×</button></header>
          <div class="bar">
            <i class="grip"></i>
            <span class="brand"><Icon name="enovia" /><b>ENOVIA</b></span>
            <button class="tool" aria-label="Transfer"><Icon name="transfer" /></button>
            <i class="sep"></i>
            <label class="search-box"><input type="checkbox" disabled />ENOVIA Search</label>
          </div>
        </section>

        <section v-for="p in palettes" :key="p.id" class="palette" :class="p.id">
          <header><h2>{{ p.title }}</h2><button class="x" :aria-label="'Close ' + p.title">×</button></header>
          <div class="bar">
            <i class="grip"></i>
            <template v-for="(t, i) in p.tools" :key="i">
              <i v-if="t.icon === 'sep'" class="sep"></i>
              <button v-else class="tool" :class="{ more: t.more }" :aria-label="t.label"><Icon :name="t.icon" /></button>
            </template>
          </div>
        </section>

        <section class="dialog" role="dialog" aria-labelledby="dialog-title">
          <header>
            <h2 id="dialog-title">Power input message</h2>
            <button aria-label="Close"><svg viewBox="0 0 8 8"><path d="M1 1L7 7M7 1L1 7" /></svg></button>
          </header>
          <div class="message">
            <svg viewBox="0 0 20 20" aria-hidden="true">
              <circle cx="10" cy="10" r="9.300" fill="#e4e6ea" stroke="#a6a8ae" />
              <circle cx="10" cy="10" r="8" fill="#2350b8" />
              <path d="M3 8Q5 2.500 10 2.500Q15 2.500 17 8Q10 11 3 8Z" fill="#5f8ce0" />
              <circle cx="10" cy="5.500" r="1.500" fill="#fff" />
              <path d="M8 8.500H11.200V14H12.200V15H8V14H9V9.500H8Z" fill="#fff" />
            </svg>
            <p>Unknown command: Graph tree Reordering</p>
          </div>
          <footer><button>OK</button></footer>
        </section>
      </main>

      <aside class="side">
        <div v-for="(g, i) in sideGroups" :key="i" class="group">
          <i class="grip"></i>
          <button v-for="t in g" :key="t.label" class="tool" :class="{ more: t.more }" :aria-label="t.label"><Icon :name="t.icon" /></button>
        </div>
      </aside>
    </div>

    <div class="bar bottom">
      <div v-for="(g, i) in bottomGroups" :key="i" class="group">
        <i class="grip"></i>
        <button v-for="t in g" :key="t.label" class="tool" :class="{ more: t.more }" :aria-label="t.label"><Icon :name="t.icon" /></button>
      </div>
      <span class="overflow">»</span>
      <span class="brand catia"><Icon name="enovia" /><b>CATIA</b></span>
    </div>

    <div class="status">
      <span>1 element selected</span>
      <input type="text" aria-label="Power input" />
      <button aria-label="Dialog"><svg viewBox="0 0 10 8"><path d="M1 1H9V6H1ZM6 7H9" /></svg></button>
      <button aria-label="Options"><svg viewBox="0 0 10 8"><path d="M2 1H8V7H2ZM4 3L6 5" /></svg></button>
    </div>

    <footer class="taskbar">
      <button class="winstart" aria-label="Start menu"><Icon name="windows" /></button>
      <label class="search">
        <i class="ring"></i>
        <input type="text" aria-label="Search" placeholder="Type here to search" />
        <Icon name="mic" />
      </label>
      <div class="apps">
        <button v-for="a in apps" :key="a.icon" :class="a.state" :aria-label="a.label"><Icon :name="a.icon" /></button>
      </div>
      <div class="tray">
        <Icon name="people" /><Icon name="chevron" /><Icon name="battery" /><Icon name="wifi" /><Icon name="sound" />
        <span class="lang">ENG<br />IN</span>
        <span class="clock">10:42 PM<br />4/21/2018</span>
        <button class="notes" aria-label="3 notifications">
          <svg viewBox="0 0 16 16"><path d="M1 1H13V11H8L5 14V11H1Z" fill="#fff" /><path d="M3 4H11M3 6H11M3 8H8" stroke="#111" /><circle cx="11" cy="11" r="4.500" fill="#555" stroke="#ddd" stroke-width=".800" /></svg>
          <b>3</b>
        </button>
      </div>
    </footer>
  </div>
</template>

<style>
body { margin: 0; background: #000; }
</style>

<style scoped>
* { box-sizing: border-box; }
button, select, input { font: inherit; color: inherit; margin: 0; padding: 0; border: 0; background: none; border-radius: 0; }
h1, h2, p { margin: 0; font-weight: 400; font-size: inherit; }
button { display: flex; align-items: center; justify-content: center; }

.desktop { display: flex; flex-direction: column; min-height: 100vh; font: 7px/10px "Open Sans", "Noto Sans", sans-serif; color: #1a1a2a; white-space: nowrap; }
.icon { width: 12px; height: 12px; flex: none; display: block; }
.logo { width: 8px; height: 8px; }

.titlebar { display: flex; align-items: center; height: 13px; background: #fff; padding-left: 2px; gap: 4px; color: #9a9a9a; }
.caption { margin-left: auto; display: flex; }
.caption button { width: 27px; height: 13px; }
.caption svg, .mdi svg { width: 7px; height: 7px; fill: none; stroke: #8c8c8c; stroke-width: 1; }
.menubar { display: flex; align-items: center; height: 13px; background: #cfcfe6; padding-left: 2px; border-bottom: 1px solid #dedeee; }
.menu { height: 12px; padding: 0 6px; }
.menu.start { background: #fbe3bf; margin-left: 2px; padding: 0 6px 0 5px; }
.menu u { text-underline-offset: 1px; text-decoration-thickness: 1px; }
.mdi { margin-left: auto; display: flex; background: #dcdcea; }
.mdi button { width: 11px; height: 12px; }

.bar { display: flex; align-items: center; background: linear-gradient(#f6f6fc, #d2d2e8 30%, #cacae0 75%, #b4b4cc); }
.grip { width: 2px; height: 9px; flex: none; border-left: 1px solid #fff; border-right: 1px solid #a8a8b8; }
.tool { position: relative; width: 17px; height: 18px; flex: none; }
.tool.more::after { content: ""; position: absolute; right: 1px; bottom: 0; border: 2px solid transparent; border-top-color: #000; border-bottom: 0; }

.format { height: 21px; padding: 0 4px 0; gap: 2px; border-bottom: 2px solid #77777f; }
.format .grip { margin-right: 2px; align-self: flex-start; margin-top: 3px; }
.combo { position: relative; width: 37px; height: 14px; background: #fff; border: 1px solid #9a9aa6; border-right-color: #eee; border-bottom-color: #eee; }
.combo select { appearance: none; width: 100%; height: 12px; padding: 0 9px 0 1px; display: block; overflow: hidden; font-family: Lato, sans-serif; }
.combo::after { content: "▼"; position: absolute; right: 0; top: 0; width: 9px; height: 12px; font: 5px/10px "DejaVu Sans", sans-serif; text-align: center; background: #e6e6ec; border: 1px solid; border-color: #fff #777 #777 #fff; pointer-events: none; }
.combo.small { width: 24px; color: #777; }
.combo.off { background: #e2e2ec; }
.combo.off::after { color: #aaa; }
.combo.swatch::before { content: ""; position: absolute; left: 3px; top: 2px; width: 21px; height: 8px; border: 1px solid; border-color: #888 #ddd #ddd #888; }

.middle { flex: 1; display: flex; min-height: 0; }
.viewport { position: relative; flex: 1; border-left: 1px solid #8c8c90; background: linear-gradient(#333366 0%, #363669 25%, #404072 50%, #505084 68%, #7070a0 82%, #9494b4 92%, #b0b0c4 100%); }
.scene { position: absolute; inset: 0; width: 100%; height: 100%; }
.mark { stroke: #9a9abf; stroke-opacity: .7; }
.mark .solid { fill: #9a9abf; fill-opacity: .7; }
.veins { fill: none; stroke: #a6a6cc; stroke-width: 1; stroke-opacity: .35; }
.triad { fill: none; stroke: #f0f0f8; stroke-width: 1; }
.axes { fill: #d8d020; font-size: 8px; }
.mini { fill: #e4e4f0; font-size: 6px; }

.tree { position: absolute; left: 0; top: 0; height: 173px; display: grid; grid-auto-rows: 1fr; color: #ececf8; }
.branches { position: absolute; left: 0; top: 0; width: 90px; height: 173px; }
.branches path { fill: none; stroke: #e8e8f2; stroke-width: 1; }
.branches circle { fill: #4c4c50; stroke: #18181c; }
.branches .signs { stroke: #ddd; }
.node { position: relative; display: flex; align-items: center; gap: 1px; font-size: 8px; line-height: 12px; padding-left: 1px; }
.node .icon { width: 14px; height: 14px; }
.node span { padding: 0 1px; }
.d1 { padding-left: 13px; }
.d2 { padding-left: 25px; }
.d3 { padding-left: 37px; }
.d4 { padding-left: 49px; }
.d5 { padding-left: 11px; }
.orange { background: #ff7a08; }
.blue { background: #0a64f0; outline: 1px solid #b8d0ff; }
.under { text-decoration: underline; }

.palette { position: absolute; background: #fff; box-shadow: 0 1px 3px rgba(0, 0, 20, .5); }
.palette header { display: flex; align-items: center; height: 18px; padding: 0 1px 0 5px; color: #8c8c8c; }
.palette .x { margin-left: auto; width: 11px; height: 12px; background: #e6e6e8; color: #fff; }
.palette .bar { height: 20px; padding-left: 4px; }
.palette .bar .grip { align-self: flex-start; margin: 2px 3px 0 0; }
.palette .bar .tool { flex: 1; }
.palette .sep { width: 2px; height: 20px; border-left: 1px solid #a8a8bc; border-right: 1px solid #fff; }
.surfaces { left: 309px; top: 15px; width: 111px; }
.enovia { left: 445px; top: 42px; width: 226px; }
.enovia .bar { height: 22px; }
.palette.enovia .bar .tool { flex: none; width: 26px; }
.wireframe { left: 566px; top: 55px; width: 157px; }
.operations { left: 639px; top: 173px; width: 114px; }
.brand { display: grid; justify-items: center; width: 28px; color: #1c2c78; }
.brand .icon { width: 18px; height: 14px; }
.brand b { font: italic bold 6px/6px "Open Sans", sans-serif; }
.enovia .brand b { color: #8c2430; }
.search-box { display: flex; align-items: center; gap: 3px; padding-left: 3px; color: #a6a6b6; }
.search-box input { appearance: none; width: 7px; height: 7px; background: #ece8e0; border: 1px solid #777; }

.dialog { position: absolute; left: 305px; top: 123px; width: 188px; background: #fff; border: 1px solid #3f93dc; box-shadow: 0 2px 8px rgba(0, 0, 20, .5); color: #111; font-family: Lato, sans-serif; }
.dialog header { display: flex; align-items: center; justify-content: space-between; height: 14px; padding: 0 5px 0 2px; }
.dialog header svg { width: 8px; height: 8px; fill: none; stroke: #222; stroke-width: 1; }
.message { display: flex; align-items: center; gap: 5px; height: 46px; padding: 0 0 0 12px; }
.message svg { width: 19px; height: 19px; flex: none; }
.dialog footer { display: flex; justify-content: flex-end; background: #f0f0f0; padding: 6px 9px 5px; }
.dialog footer button { width: 44px; height: 13px; background: #f0f0f0; border: 1px solid; border-color: #777 #444 #444 #777; box-shadow: inset 1px 1px #fff, inset -1px -1px #999; }

.side { display: grid; grid-template-rows: 27fr 45fr 28fr 26fr 96fr 76fr 45fr; width: 22px; background: linear-gradient(90deg, #fff 2px, #dcdcee 4px, #cfcfe6 60%, #c2c2d8); }
.side .group { display: flex; flex-direction: column; align-items: center; padding: 4px 0 0 1px; min-height: 0; }
.side .grip { width: 10px; height: 2px; border: 0; border-top: 1px solid #fff; border-bottom: 1px solid #a8a8b8; margin: 0 4px 2px 0; }
.side .tool { flex: 1; min-height: 0; }

.bottom { display: grid; grid-template-columns: 181fr 125fr 210fr 27fr 61fr 159fr 9px 28px; height: 22px; border-bottom: 1px solid #9898ae; }
.bottom .group { display: flex; align-items: center; padding: 0 6px 0 1px; min-width: 0; }
.bottom .group:first-child { padding-left: 4px; }
.bottom .grip { margin: 0 2px 4px 0; }
.bottom .tool { flex: 1; min-width: 0; }
.overflow { color: #8c8ca0; font-size: 8px; align-self: flex-start; }
.catia b { color: #1c2c58; }

.status { display: flex; align-items: center; height: 14px; background: #cfcfe6; padding-left: 2px; gap: 3px; font-family: Lato, sans-serif; }
.status span { margin-right: auto; }
.status input { width: 22%; height: 12px; background: #fff; border: 1px solid #888; }
.status button { width: 17px; height: 12px; border: 1px solid; border-color: #f4f4fa #9a9aac #9a9aac #f4f4fa; }
.status svg { width: 9px; height: 7px; fill: none; stroke: #9a9aac; }

.taskbar { display: grid; grid-template-columns: 28fr 201fr 373fr 198fr; height: 24px; background: #0d0d0f; color: #f4f4f4; }
.winstart .icon { width: 11px; height: 11px; }
.search { min-width: 0; display: flex; align-items: center; gap: 6px; background: #f2f2f2; padding: 0 6px; color: #444; }
.search input { flex: 1; min-width: 0; font-size: 8px; outline: 0; }
.search input::placeholder { color: #505050; opacity: 1; }
.ring { width: 12px; height: 12px; border: 2px solid #111; border-radius: 50%; }
.apps { display: flex; min-width: 0; }
.apps button { flex: 1; border-bottom: 2px solid transparent; padding-top: 1px; background-clip: padding-box; position: relative; }
.apps .icon { width: 13px; height: 13px; }
.apps .open::after { content: ""; position: absolute; left: 3px; right: 3px; bottom: -2px; height: 2px; background: #6cb0ea; }
.apps .active { background: #3c4650; }
.apps .active::after { left: 0; right: 0; }
.tray { min-width: 0; display: flex; align-items: center; justify-content: space-between; padding: 0 9px 0 14px; font: 7px/10px Lato, sans-serif; text-align: center; }
.tray .icon { width: 11px; height: 11px; }
.notes { position: relative; }
.notes svg { width: 14px; height: 14px; }
.notes b { position: absolute; right: 1px; bottom: 0; font: 6px/8px "Open Sans", sans-serif; }
</style>
